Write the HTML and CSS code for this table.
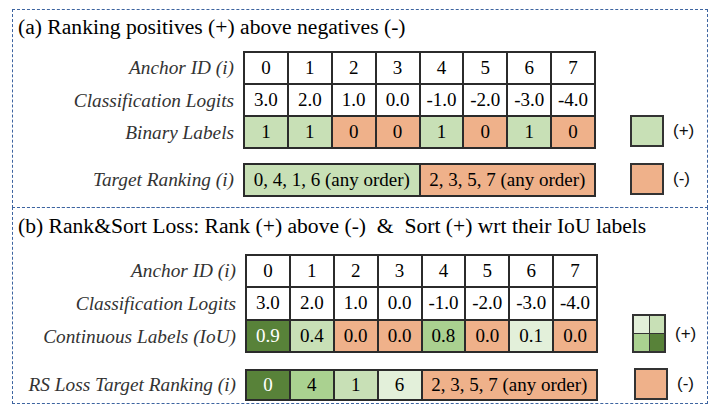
FILE: index.html
```html
<!DOCTYPE html>
<html>
<head>
<meta charset="utf-8">
<link rel="stylesheet" href="styles.css">
</head>
<body>
<div class="fig">
  <section class="panel panel-a">
    <h2 class="title">(a) Ranking positives (+) above negatives (-)</h2>
    <div class="grid">
      <div class="label r1">Anchor ID (i)</div>
      <div class="label r2">Classification Logits</div>
      <div class="label r3">Binary Labels</div>
      <div class="tbl">
        <div class="c">0</div><div class="c">1</div><div class="c">2</div><div class="c">3</div><div class="c">4</div><div class="c">5</div><div class="c">6</div><div class="c">7</div>
        <div class="c">3.0</div><div class="c">2.0</div><div class="c">1.0</div><div class="c">0.0</div><div class="c">-1.0</div><div class="c">-2.0</div><div class="c">-3.0</div><div class="c">-4.0</div>
        <div class="c pos">1</div><div class="c pos">1</div><div class="c neg">0</div><div class="c neg">0</div><div class="c pos">1</div><div class="c neg">0</div><div class="c pos">1</div><div class="c neg">0</div>
      </div>
      <div class="legend lg-pos-a"><span class="box pos"></span><span class="lt">(+)</span></div>
      <div class="label r5">Target Ranking (i)</div>
      <div class="rank">
        <div class="rc pos w4">0, 4, 1, 6 (any order)</div>
        <div class="rc neg w4">2, 3, 5, 7 (any order)</div>
      </div>
      <div class="legend lg-neg"><span class="box neg"></span><span class="lt">(-)</span></div>
    </div>
  </section>
  <section class="panel panel-b">
    <h2 class="title">(b) Rank&amp;Sort Loss: Rank (+) above (-)  &amp;  Sort (+) wrt their IoU labels</h2>
    <div class="grid">
      <div class="label r1">Anchor ID (i)</div>
      <div class="label r2">Classification Logits</div>
      <div class="label r3">Continuous Labels (IoU)</div>
      <div class="tbl">
        <div class="c">0</div><div class="c">1</div><div class="c">2</div><div class="c">3</div><div class="c">4</div><div class="c">5</div><div class="c">6</div><div class="c">7</div>
        <div class="c">3.0</div><div class="c">2.0</div><div class="c">1.0</div><div class="c">0.0</div><div class="c">-1.0</div><div class="c">-2.0</div><div class="c">-3.0</div><div class="c">-4.0</div>
        <div class="c g4">0.9</div><div class="c g2">0.4</div><div class="c neg">0.0</div><div class="c neg">0.0</div><div class="c g3">0.8</div><div class="c neg">0.0</div><div class="c g1">0.1</div><div class="c neg">0.0</div>
      </div>
      <div class="legend lg-pos-b">
        <span class="quad"><i class="g1"></i><i class="g2"></i><i class="g3"></i><i class="g4"></i></span>
        <span class="lt">(+)</span>
      </div>
      <div class="label r5">RS Loss Target Ranking (i)</div>
      <div class="rank">
        <div class="rc g4 w1">0</div>
        <div class="rc g3 w1">4</div>
        <div class="rc g2 w1">1</div>
        <div class="rc g1 w1">6</div>
        <div class="rc neg w4">2, 3, 5, 7 (any order)</div>
      </div>
      <div class="legend lg-neg"><span class="box neg"></span><span class="lt">(-)</span></div>
    </div>
  </section>
</div>
</body>
</html>
```

FILE: styles.css
```css
html, body {
  margin: 0;
  padding: 0;
  background: #ffffff;
}

body {
  font-family: "Liberation Serif", "Times New Roman", serif;
  color: #000;
}

.fig {
  padding: 9px 12px 0 12px;
  width: 696px;
}

.panel {
  border: 1px dashed #3d64a0;
}

.panel-a {
  padding: 5px 0 10px 0;
}

.panel-b {
  margin-top: -1px;
  padding: 6px 0 2px 0;
}

.title {
  margin: 0;
  padding-left: 5px;
  font-weight: normal;
  font-size: 21.6px;
  line-height: 24px;
  white-space: pre;
}

.grid {
  display: grid;
}

.panel-a .grid {
  margin-top: 12px;
  grid-template-columns: 230px 353px auto;
  grid-template-rows: 33px 33px 32px 14px 34px;
}

.panel-b .grid {
  margin-top: 16px;
  grid-template-columns: 232px 353px auto;
  grid-template-rows: 33px 33px 33px 16px 32px;
}

.label {
  grid-column: 1;
  padding-right: 9px;
  font-style: italic;
  font-size: 19.3px;
  color: #333;
  display: flex;
  align-items: center;
  justify-content: flex-end;
  white-space: nowrap;
}

.r1 { grid-row: 1; }
.r2 { grid-row: 2; }
.r3 { grid-row: 3; }
.r5 { grid-row: 5; }

.tbl {
  grid-column: 2;
  grid-row: 1 / 4;
  display: grid;
  grid-template-columns: repeat(8, 1fr);
  grid-template-rows: repeat(3, 1fr);
  border-top: 2px solid #2b2b2b;
  border-left: 2px solid #2b2b2b;
}

.c, .rc {
  display: flex;
  align-items: center;
  justify-content: center;
  font-size: 19px;
  border-right: 2px solid #2b2b2b;
  border-bottom: 2px solid #2b2b2b;
  white-space: nowrap;
}

.rank {
  grid-column: 2;
  grid-row: 5;
  display: grid;
  grid-template-columns: repeat(8, 1fr);
  border-top: 2px solid #2b2b2b;
  border-left: 2px solid #2b2b2b;
}

.w1 { grid-column: span 1; }
.w4 { grid-column: span 4; }

.pos { background: #c8e0b6; }
.neg { background: #efb18a; }
.g1 { background: #e3f0da; }
.g2 { background: #c8e0b6; }
.g3 { background: #aad190; }
.g4 { background: #588239; color: #fff; }

.legend {
  grid-column: 3;
  display: flex;
  align-items: center;
  padding-left: 34px;
  font-family: "Liberation Sans", Arial, sans-serif;
  font-size: 17px;
  color: #111;
}

.lg-pos-a {
  grid-row: 3;
  align-self: start;
  margin-top: -2px;
}

.lg-pos-b {
  grid-row: 2 / 4;
  align-self: end;
}

.lg-neg {
  grid-row: 5;
  align-self: start;
}

.panel-b .lg-neg {
  padding-left: 36px;
  margin-top: -1px;
}

.box {
  width: 34px;
  height: 32px;
  box-sizing: border-box;
  border: 2px solid #333;
  flex: none;
}

.lt {
  margin-left: 9px;
}

.quad {
  display: grid;
  grid-template-columns: 1fr 1fr;
  grid-template-rows: 1fr 1fr;
  width: 34px;
  height: 39px;
  box-sizing: border-box;
  border: 2px solid #333;
  gap: 1px;
  background: #333;
  flex: none;
}
```
